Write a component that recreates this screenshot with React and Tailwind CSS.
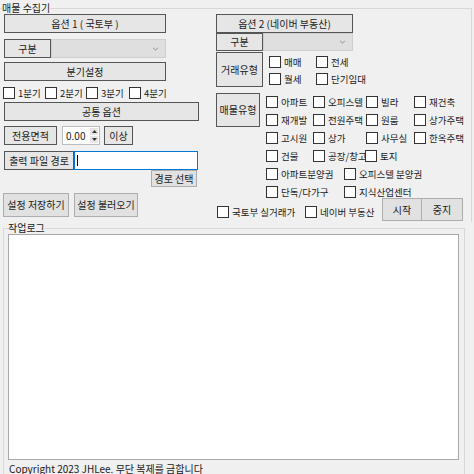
import React from 'react'

const FONT = { fontFamily: '"Noto Sans CJK KR", "Noto Sans", sans-serif' }

function DarkBox({ className = '', children }) {
  return (
    <div className={`flex items-center justify-center border border-[#555] bg-[#e6e6e6] ${className}`}>
      {children}
    </div>
  )
}

function Btn({ className = '', children }) {
  return (
    <div className={`flex items-center justify-center border border-[#adadad] bg-[#e1e1e1] ${className}`}>
      {children}
    </div>
  )
}

function Combo({ className = '' }) {
  return (
    <div className={`relative border border-[#cfcfcf] bg-[#dfdfdf] ${className}`}>
      <svg viewBox="0 0 8 5" className="absolute right-[6px] top-1/2 -translate-y-1/2 h-[4px] w-[7px]">
        <path d="M1 1l3 3 3-3" fill="none" stroke="#7a7a7a" strokeWidth="1" />
      </svg>
    </div>
  )
}

function Check({ label, className = '' }) {
  return (
    <div className={`flex items-center whitespace-nowrap text-[9.5px] ${className}`}>
      <span className="h-[12px] w-[12px] shrink-0 border border-[#333] bg-white" />
      <span className="ml-[3px]">{label}</span>
    </div>
  )
}

const TYPE_ROWS = [
  [['아파트', 'w-[47px]'], ['오피스텔', 'w-[53px]'], ['빌라', 'w-[48px]'], ['재건축', '']],
  [['재개발', 'w-[47px]'], ['전원주택', 'w-[53px]'], ['원룸', 'w-[48px]'], ['상가주택', '']],
  [['고시원', 'w-[47px]'], ['상가', 'w-[53px]'], ['사무실', 'w-[48px]'], ['한옥주택', '']],
  [['건물', 'w-[47px]'], ['공장/창고', 'w-[52px]'], ['토지', '']],
  [['아파트분양권', 'w-[78px]'], ['오피스텔 분양권', '']],
  [['단독/다가구', 'w-[78px]'], ['지식산업센터', '']],
]

export default function App() {
  return (
    <div className="h-[474px] w-[474px] overflow-hidden bg-[#f0f0f0] text-[10px] leading-[12px] text-[#1a1a1a]" style={FONT}>
      <fieldset className="mr-[2px] mt-[2px] h-[220px] border border-b-0 border-l-0 border-[#d8d8d8] pl-[4px]">
        <legend className="ml-[-2px] px-0 leading-[12px]">매물 수집기</legend>
        <div className="flex">
          {/* left column */}
          <div className="flex w-[196px] flex-col">
            <DarkBox className="h-[19px] w-[162px]">옵션 1 ( 국토부 )</DarkBox>
            <div className="mt-[6px] flex h-[19px]">
              <DarkBox className="w-[47px]">구분</DarkBox>
              <Combo className="w-[115px]" />
            </div>
            <DarkBox className="mt-[4px] h-[19px] w-[162px]">분기설정</DarkBox>
            <div className="-ml-px mt-[3px] flex h-[17px]">
              <Check label="1분기" className="w-[42px]" />
              <Check label="2분기" className="w-[41px]" />
              <Check label="3분기" className="w-[43px]" />
              <Check label="4분기" />
            </div>
            <DarkBox className="mt-[1px] h-[19px] w-[195px]">공통 옵션</DarkBox>
            <div className="mt-[5px] flex h-[19px]">
              <DarkBox className="w-[53px]">전용면적</DarkBox>
              <div className="ml-[5px] flex w-[38px] items-center border border-[#bdbdbd] bg-white">
                <span className="ml-[3px] flex-1">0.00</span>
                <div className="mr-px flex h-[15px] w-[8px] flex-col justify-between">
                  <div className="flex h-[7px] items-center justify-center bg-[#e6e6e6]">
                    <svg viewBox="0 0 5 3" className="h-[3px] w-[5px]"><path d="M0 3L2.5 0 5 3z" fill="#333" /></svg>
                  </div>
                  <div className="flex h-[7px] items-center justify-center bg-[#e6e6e6]">
                    <svg viewBox="0 0 5 3" className="h-[3px] w-[5px]"><path d="M0 0h5L2.5 3z" fill="#333" /></svg>
                  </div>
                </div>
              </div>
              <DarkBox className="ml-[4px] w-[29px]">이상</DarkBox>
            </div>
            <div className="mt-[6px] flex h-[19px]">
              <DarkBox className="w-[70px]">출력 파일 경로</DarkBox>
              <div className="flex w-[124px] items-center border border-[#0078d7] bg-white">
                <span className="ml-[2px] h-[11px] w-px bg-black" />
              </div>
            </div>
            <Btn className="ml-[147px] h-[17px] w-[46px]">경로 선택</Btn>
            <div className="-ml-px mt-[6px] flex h-[24px]">
              <Btn className="w-[66px]">설정 저장하기</Btn>
              <Btn className="ml-[5px] w-[64px]">설정 불러오기</Btn>
            </div>
          </div>

          {/* right column */}
          <div className="ml-[16px] flex w-[248px] flex-col">
            <DarkBox className="h-[19px] w-[137px]">옵션 2 (네이버 부동산)</DarkBox>
            <div className="flex h-[18px]">
              <DarkBox className="w-[47px]">구분</DarkBox>
              <Combo className="w-[90px]" />
            </div>
            <div className="mt-px flex">
              <DarkBox className="h-[35px] w-[47px]">거래유형</DarkBox>
              <div className="ml-[6px] flex flex-col pt-px">
                <div className="flex h-[17px]">
                  <Check label="매매" className="w-[47px]" />
                  <Check label="전세" />
                </div>
                <div className="flex h-[17px]">
                  <Check label="월세" className="w-[47px]" />
                  <Check label="단기임대" />
                </div>
              </div>
            </div>
            <div className="mt-[6px] flex">
              <DarkBox className="h-[34px] w-[47px]">매물유형</DarkBox>
              <div className="ml-[6px] flex flex-col">
                {TYPE_ROWS.map((row, i) => (
                  <div key={i} className="flex h-[18px]">
                    {row.map(([label, w]) => (
                      <Check key={label} label={label} className={w} />
                    ))}
                  </div>
                ))}
              </div>
            </div>
            <div className="mt-[-3px] flex h-[23px]">
              <Check label="국토부 실거래가" className="ml-px mt-[4px] w-[88px]" />
              <Check label="네이버 부동산" className="mt-[4px] w-[77px]" />
              <Btn className="w-[40px]">시작</Btn>
              <Btn className="w-[41px] border-l-0">중지</Btn>
            </div>
          </div>
        </div>
      </fieldset>

      <fieldset className="ml-[3px] w-[462px] border border-[#d8d8d8] pl-[4px]">
        <legend className="px-0 leading-[12px]">작업로그</legend>
        <div className="h-[226px] w-[451px] border border-[#a8a8a8] bg-white" />
        <div className="ml-px mt-[3px] whitespace-nowrap">Copyright 2023 JHLee. 무단 복제를 금합니다</div>
      </fieldset>
    </div>
  )
}
